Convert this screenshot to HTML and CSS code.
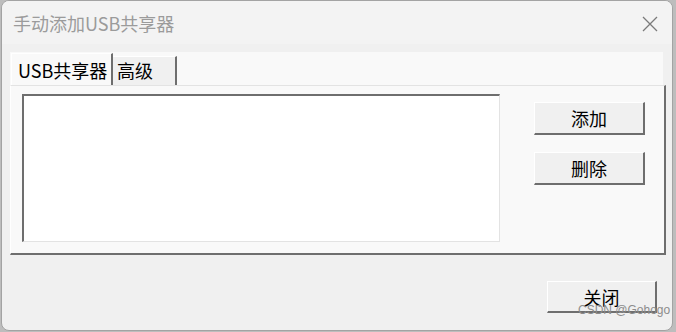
FILE: index.html
```html
<!DOCTYPE html>
<html lang="zh-CN">
<head>
    <meta charset="UTF-8">
    <meta name="viewport" content="width=device-width, initial-scale=1.0">
    <title>手动添加USB共享器</title>
    <link rel="stylesheet" href="styles.css">
</head>
<body>
    <section class="window">
        <section class="titlebar">
            <span class="title">手动添加USB共享器</span>
            <span class="close">
                <svg width="16" height="16" viewBox="0 0 16 16"><path d="M1 1 L15 15 M15 1 L1 15" stroke="#7a7a7a" stroke-width="1.3" fill="none"/></svg>
            </span>
        </section>
        <section class="client">
            <section class="tabs">
                <div class="tab active">USB共享器</div>
                <div class="tab">高级</div>
            </section>
            <section class="panel">
                <div class="listbox"></div>
                <div class="side">
                    <button class="btn">添加</button>
                    <button class="btn">删除</button>
                </div>
            </section>
            <section class="footer">
                <button class="btn btn-close">关闭</button>
            </section>
        </section>
        <!-- watermark sits over the close button -->
        <span class="mark">CSDN @Gohogo</span>
    </section>
</body>
</html>
```
FILE: styles.css
```css
body {
    font-family: "Noto Sans CJK SC", "Noto Sans", sans-serif;
    margin: 0;
    padding: 0;
    background-color: #bdbdbd;
    overflow: hidden;
}

.window {
    position: relative;
    box-sizing: border-box;
    margin-left: 1px;
    width: 672px;
    height: 331px;
    background-color: #f0f0f0;
    border: 1px solid #a3a3a3;
    border-radius: 8px;
    overflow: hidden;
}

.titlebar {
    height: 43px;
    background-color: #f3f3f3;
    display: flex;
    align-items: center;
    justify-content: space-between;
    padding: 0 14px 0 11px;
}

.title {
    color: #9b9b9b;
    font-size: 18px;
}

.close {
    display: flex;
    margin-top: 2px;
}

.client {
    padding: 8px 0 0 8px;
}

.tabs {
    display: flex;
    align-items: flex-end;
    width: 653px;
    height: 33px;
    background-color: #f9f9f9;
}

.tab {
    box-sizing: border-box;
    font-size: 18px;
    color: #000;
    line-height: 1;
}

.tab.active {
    margin-left: 1px;
    width: 102px;
    height: 32px;
    padding: 7px 0 0 6px;
    background-color: #f9f9f9;
    border-left: 1px solid #ffffff;
    border-top: 1px solid #ffffff;
    border-right: 2px solid #6e6e6e;
}

.tab:not(.active) {
    width: 64px;
    height: 29px;
    padding: 4px 0 0 4px;
    background-color: #f0f0f0;
    border-top: 1px solid #fff;
    border-right: 2px solid #6e6e6e;
}

.panel {
    box-sizing: border-box;
    display: flex;
    width: 656px;
    height: 170px;
    background-color: #f9f9f9;
    border-top: 1px solid #e3e3e3;
    border-left: 1px solid #ffffff;
    border-right: 2px solid #6e6e6e;
    border-bottom: 2px solid #6e6e6e;
    padding: 8px 0 0 11px;
}

.listbox {
    box-sizing: border-box;
    width: 478px;
    height: 148px;
    background-color: #fff;
    border-left: 2px solid #6e6e6e;
    border-top: 2px solid #6e6e6e;
    border-right: 1px solid #e3e3e3;
    border-bottom: 1px solid #e3e3e3;
}

.side {
    display: flex;
    flex-direction: column;
    gap: 17px;
    margin: 8px 0 0 34px;
}

.btn {
    box-sizing: border-box;
    width: 111px;
    height: 33px;
    padding: 0;
    font-family: "Noto Sans CJK SC", sans-serif;
    font-size: 18px;
    color: #000;
    background-color: #f0f0f0;
    border-top: 1px solid #ffffff;
    border-left: 1px solid #ffffff;
    border-right: 2px solid #6e6e6e;
    border-bottom: 2px solid #6e6e6e;
    border-radius: 0;
}

.footer {
    display: flex;
    justify-content: flex-end;
    padding-top: 26px;
    width: 647px;
}

.btn-close {
    width: 110px;
    height: 32px;
}

.mark {
    position: absolute;
    left: 576px;
    top: 302px;
    font-family: "Liberation Sans", sans-serif;
    font-size: 12px;
    color: #8c8c8c;
}
```
